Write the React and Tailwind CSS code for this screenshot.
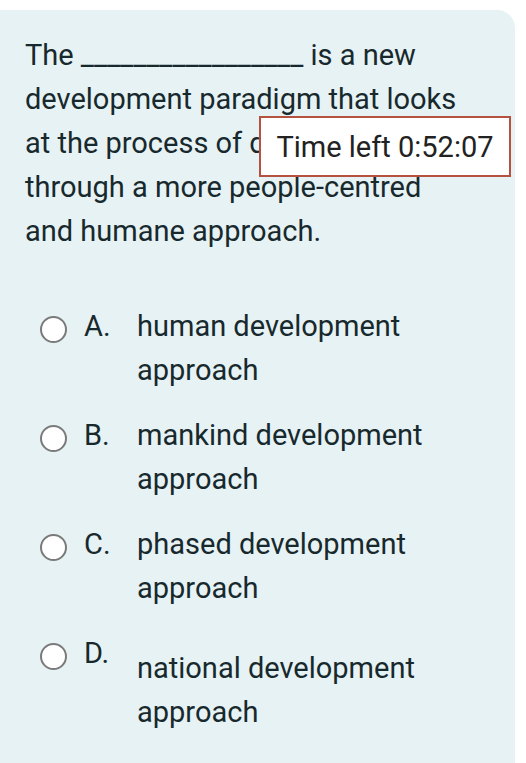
import React from 'react';

const options = [
  { key: 'A.', line1: 'human development', line2: 'approach' },
  { key: 'B.', line1: 'mankind development', line2: 'approach' },
  { key: 'C.', line1: 'phased development', line2: 'approach' },
  { key: 'D.', line1: 'national development', line2: 'approach', drop: true },
];

export default function App() {
  return (
    <div className="min-h-[763px] bg-white pt-[10px] font-['Roboto',sans-serif] text-[29px] leading-[44px] text-[#18292d]">
      <div className="relative w-[515px] min-h-[753px] rounded-tr-[18px] bg-[#e6f2f4]">
        {/* Question */}
        <p className="pl-[25px] pt-[23px]">
          The _________________ is a new
          <br />
          development paradigm that looks
          <br />
          at the process of development
          <br />
          through a more people-centred
          <br />
          and humane approach.
        </p>

        {/* Timer overlay */}
        <div className="absolute left-[259px] top-[106px] flex h-[61px] w-[252px] items-center justify-center border-2 border-[#b5523f] bg-white text-[#222]">
          Time left 0:52:07
        </div>

        {/* Options */}
        <div className="mt-[51px] flex flex-col gap-[21px]">
          {options.map(opt => (
            <div key={opt.key} className="flex items-start pl-[40px]">
              <div className="mt-[12px] h-[27px] w-[27px] shrink-0 rounded-full border-2 border-[#7a7a7a] bg-white" />
              <div className="ml-[17px] w-[53px] shrink-0">{opt.key}</div>
              <div className={opt.drop ? 'mt-[15px]' : ''}>
                {opt.line1}
                <br />
                {opt.line2}
              </div>
            </div>
          ))}
        </div>
      </div>
    </div>
  );
}
